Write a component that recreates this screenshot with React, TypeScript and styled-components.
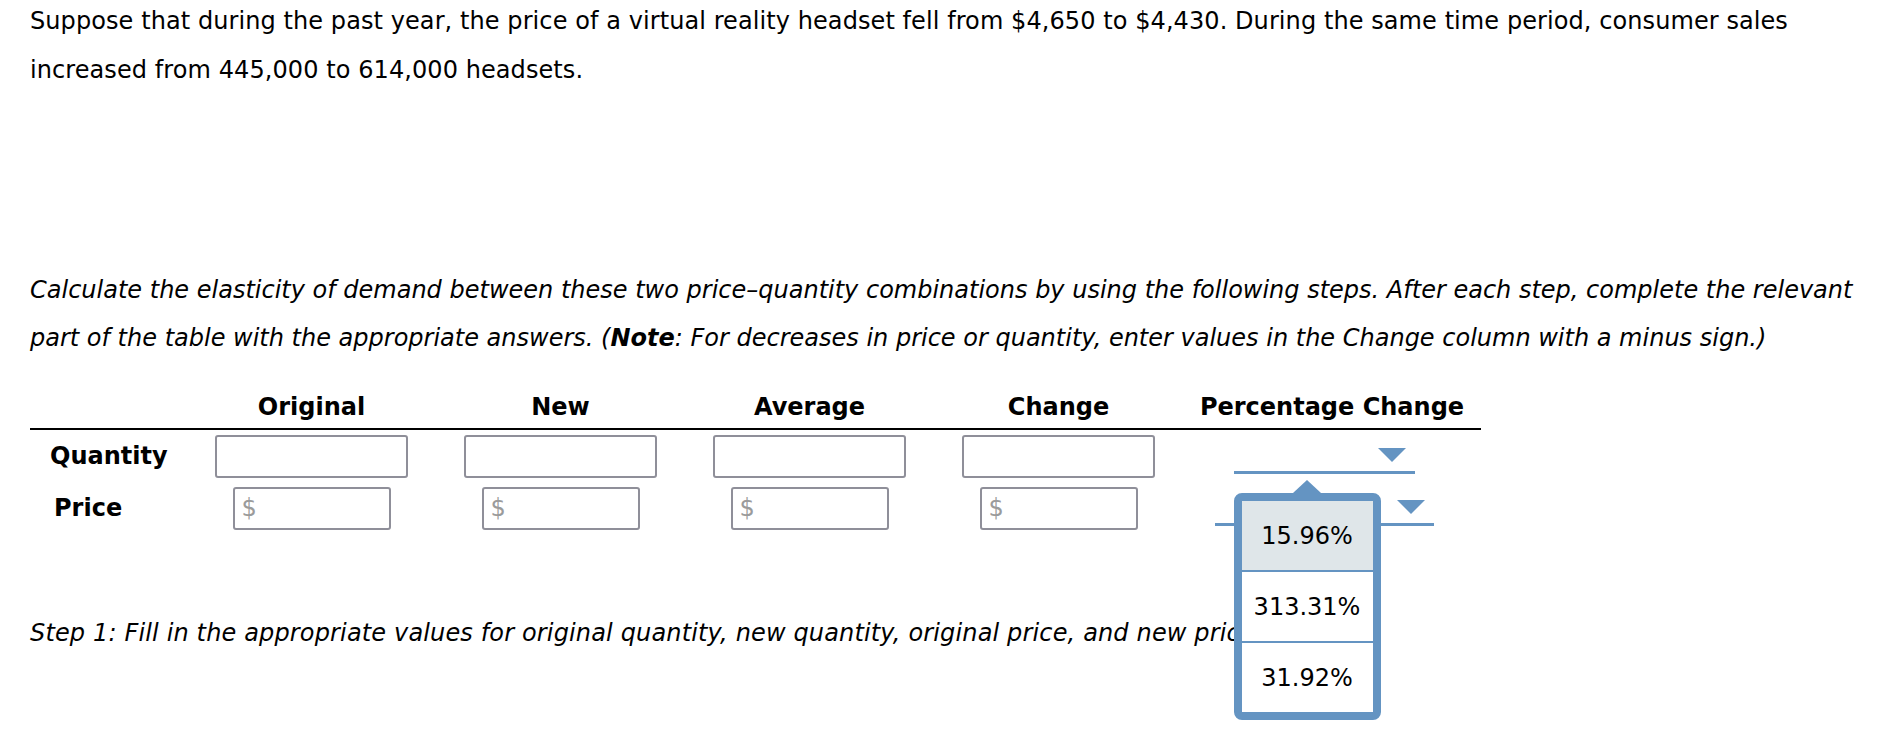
import React from 'react';
import styled, { createGlobalStyle } from 'styled-components';

const blue = '#6494c2';

const Global = createGlobalStyle`
  html, body {
    margin: 0;
    background: #fff;
  }
  body {
    color: #000;
    font-family: "DejaVu Sans", Verdana, sans-serif;
    font-size: 24px;
  }
`;

const Page = styled.div`
  padding: 0 30px;
  width: 1898px;
  min-height: 732px;
  box-sizing: border-box;
`;

const Intro = styled.p`
  margin: -3px 0 0;
  line-height: 49px;
  letter-spacing: 0.08px;
`;

const Instructions = styled.p`
  margin: 171px 0 0;
  line-height: 48px;
  font-style: italic;
`;

const Table = styled.div`
  margin-top: 23px;
  width: 1451px;
`;

const Grid = styled.div<{ $height: number; $rule?: boolean }>`
  display: grid;
  grid-template-columns: 157px repeat(4, 249px) 298px;
  height: ${(p) => p.$height}px;
  border-bottom: ${(p) => (p.$rule ? '2px solid #000' : 'none')};
`;

const HeadCell = styled.div`
  display: flex;
  align-items: center;
  justify-content: center;
  font-weight: bold;
`;

const Label = styled.div<{ $indent: number }>`
  display: flex;
  align-items: center;
  padding-left: ${(p) => p.$indent}px;
  font-weight: bold;
`;

const Cell = styled.div`
  display: flex;
  align-items: center;
  justify-content: center;
`;

const SelectCell = styled.div`
  display: flex;
  justify-content: center;
  padding-right: 16px;
`;

const Field = styled.div<{ $width: number }>`
  box-sizing: border-box;
  width: ${(p) => p.$width}px;
  height: 43px;
  border: 2px solid #8f8f99;
  border-radius: 3px;
  background: #fff;
  display: flex;
  align-items: center;
  padding-left: 7px;
  color: #9b9b9b;
`;

const Select = styled.div<{ $width: number }>`
  position: relative;
  box-sizing: border-box;
  width: ${(p) => p.$width}px;
  height: 44px;
  border-bottom: 3px solid ${blue};
`;

const Arrow = styled.span`
  position: absolute;
  right: 9px;
  bottom: 9px;
  width: 0;
  height: 0;
  border-left: 14px solid transparent;
  border-right: 14px solid transparent;
  border-top: 14px solid ${blue};
`;

const Popup = styled.div`
  position: absolute;
  left: 19px;
  top: 11px;
  width: 147px;
  box-sizing: border-box;
  border: 8px solid ${blue};
  border-radius: 8px;
  background: #fff;
  z-index: 5;

  &::before {
    content: '';
    position: absolute;
    left: 50%;
    top: -21px;
    transform: translateX(-50%);
    border-left: 14px solid transparent;
    border-right: 14px solid transparent;
    border-bottom: 13px solid ${blue};
  }
`;

const Option = styled.div<{ $active?: boolean }>`
  height: 69px;
  display: flex;
  align-items: center;
  justify-content: center;
  background: ${(p) => (p.$active ? '#dfe6e9' : '#fff')};
  & + & {
    border-top: 2px solid ${blue};
  }
`;

const Step = styled.p`
  margin: 75px 0 0;
  line-height: 49px;
  font-style: italic;
  letter-spacing: 0.15px;
`;

const heads = ['Original', 'New', 'Average', 'Change', 'Percentage Change'];
const options = ['15.96%', '313.31%', '31.92%'];

export default function App() {
  return (
    <>
      <Global />
      <Page>
        <Intro>
          Suppose that during the past year, the price of a virtual reality headset fell from $4,650 to
          $4,430. During the same time period, consumer sales increased from 445,000 to 614,000
          headsets.
        </Intro>
        <Instructions>
          Calculate the elasticity of demand between these two price–quantity combinations by using the
          following steps. After each step, complete the relevant part of the table with the appropriate
          answers. (<b>Note</b>: For decreases in price or quantity, enter values in the Change column
          with a minus sign.)
        </Instructions>
        <Table>
          <Grid $height={43} $rule>
            <HeadCell />
            {heads.map((h) => (
              <HeadCell key={h}>{h}</HeadCell>
            ))}
          </Grid>
          <Grid $height={52}>
            <Label $indent={20}>Quantity</Label>
            {[0, 1, 2, 3].map((i) => (
              <Cell key={i}>
                <Field $width={193} />
              </Cell>
            ))}
            <SelectCell>
              <Select $width={181}>
                <Arrow />
              </Select>
            </SelectCell>
          </Grid>
          <Grid $height={52}>
            <Label $indent={24}>Price</Label>
            {[0, 1, 2, 3].map((i) => (
              <Cell key={i}>
                <Field $width={158}>$</Field>
              </Cell>
            ))}
            <SelectCell>
              <Select $width={219}>
                <Arrow />
                <Popup>
                  {options.map((o, i) => (
                    <Option key={o} $active={i === 0}>
                      {o}
                    </Option>
                  ))}
                </Popup>
              </Select>
            </SelectCell>
          </Grid>
        </Table>
        <Step>
          Step 1: Fill in the appropriate values for original quantity, new quantity, original price, and
          new price.
        </Step>
      </Page>
    </>
  );
}
